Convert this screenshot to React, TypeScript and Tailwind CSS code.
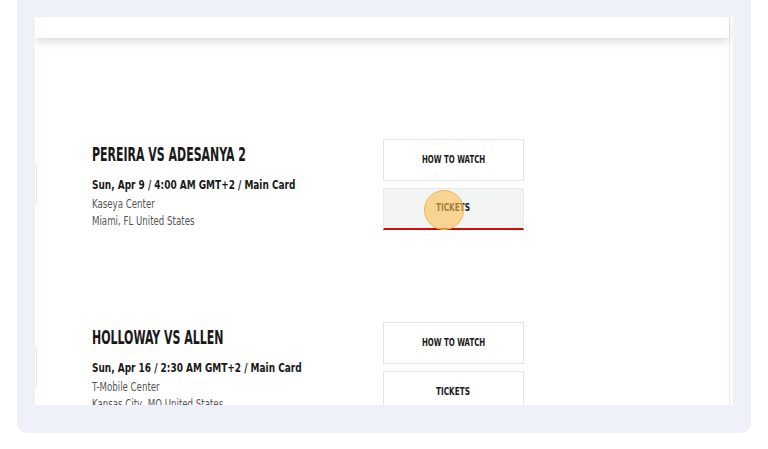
import React from 'react'

const CONDENSED = { fontFamily: '"DejaVu Sans Condensed", "DejaVu Sans", sans-serif' }

type Evento = {
  titulo: string
  fecha: string
  lugar: string
  ciudad: string
  hover?: boolean
}

const EVENTOS: Evento[] = [
  {
    titulo: 'Pereira vs Adesanya 2',
    fecha: 'Sun, Apr 9 / 4:00 AM GMT+2 / Main Card',
    lugar: 'Kaseya Center',
    ciudad: 'Miami, FL United States',
    hover: true,
  },
  {
    titulo: 'Holloway vs Allen',
    fecha: 'Sun, Apr 16 / 2:30 AM GMT+2 / Main Card',
    lugar: 'T-Mobile Center',
    ciudad: 'Kansas City, MO United States',
  },
]

export default function App() {
  return (
    <div className="w-[768px] h-[449px] bg-white overflow-hidden">
      {/* Marco */}
      <div className="ml-[17px] w-[734px] h-[433px] bg-[#eef1f8] rounded-b-[10px] pt-[17px] pl-[18px]">
        <div className="w-[698px] h-[388px] bg-white overflow-hidden">
          <div className="w-[695px] h-full border-r border-[#ebebeb]">
            {/* Header */}
            <div className="relative z-10 h-[21px] bg-white shadow-[0_3px_10px_rgba(0,0,0,0.16)]" />

            <main className="pt-[101px] flex flex-col gap-[92px]">
              {EVENTOS.map((e) => (
                <EventoRow key={e.titulo} evento={e} />
              ))}
            </main>
          </div>
        </div>
      </div>
    </div>
  )
}

function EventoRow({ evento }: { evento: Evento }) {
  return (
    <div className="flex items-start h-[91px]" style={CONDENSED}>
      {/* borde de tarjeta cortada */}
      <div className="mt-[24px] w-[2px] h-[42px] border-r border-y border-[#e6e6e6] rounded-r-[2px]" />
      <div className="ml-[55px] w-[291px] pt-[3px] whitespace-nowrap">
        <h2 className="h-[24px] text-[20px] leading-[24px] font-bold uppercase text-[#191919]">
          <span className="inline-block origin-left scale-x-[0.61]">{evento.titulo}</span>
        </h2>
        <p className="mt-[11px] h-[17px] text-[12px] leading-[17px] font-bold text-[#191919]">
          <span className="inline-block origin-left scale-x-[0.83]">{evento.fecha}</span>
        </p>
        <p className="mt-[2px] h-[17px] text-[12px] leading-[17px] text-[#555]">
          <span className="inline-block origin-left scale-x-[0.8]">{evento.lugar}</span>
        </p>
        <p className="h-[17px] text-[12px] leading-[17px] text-[#555]">
          <span className="inline-block origin-left scale-x-[0.8]">{evento.ciudad}</span>
        </p>
      </div>
      <div className="w-[141px] flex flex-col gap-[7px]">
        <button className="h-[42px] border border-[#e4e4e4] bg-white text-[11px] font-bold uppercase text-[#191919]">
          <span className="inline-block scale-x-[0.71]">How to watch</span>
        </button>
        <button
          className={`relative h-[42px] border text-[11px] font-bold uppercase text-[#191919] ${
            evento.hover ? 'bg-[#f2f4f4] border-[#e8eaea] border-b-2 border-b-[#d20a0a]' : 'bg-white border-[#e4e4e4]'
          }`}
        >
          <span className="inline-block scale-x-[0.74]">Tickets</span>
          {evento.hover && (
            <span className="absolute left-[40px] top-[1px] w-[40px] h-[40px] rounded-full bg-[rgba(252,190,80,0.6)] border border-[#f3b654]" />
          )}
        </button>
      </div>
    </div>
  )
}
